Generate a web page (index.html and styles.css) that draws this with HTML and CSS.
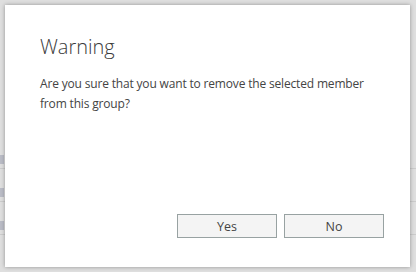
FILE: index.html
```html
<!DOCTYPE html>
<html lang="en">
<head>
    <meta charset="UTF-8">
    <title>Warning</title>
    <link rel="stylesheet" href="styles.css">
</head>
<body>
    <div class="page">
        <div class="row"><span class="mark"></span></div>
        <div class="row"><span class="mark"></span></div>
        <div class="row"><span class="mark"></span></div>
    </div>
    <div class="overlay">
        <div class="dialog">
            <h1 class="dialog-title">Warning</h1>
            <p class="dialog-text">Are you sure that you want to remove the selected member from this group?</p>
            <div class="dialog-buttons">
                <button class="button">Yes</button>
                <button class="button">No</button>
            </div>
        </div>
    </div>
</body>
</html>
```

FILE: styles.css
```css
html, body { margin: 0; height: 100%; }
body { font-family: "Open Sans", "Noto Sans", sans-serif; background: #f2f2f2; overflow: hidden; position: relative; }
.page { padding-top: 136px; }
.row { height: 32px; border-bottom: 1px solid #d4d4d4; display: flex; align-items: center; }
.mark { display: block; width: 4px; height: 9px; background: #b9bccb; margin-top: 14px; }
.overlay { position: absolute; inset: 0; background: rgba(190,190,190,0.35); }
.dialog { position: absolute; left: 5px; top: 5px; width: 405px; height: 262px; background: #fff; box-shadow: 0 0 4px rgba(0,0,0,0.35); box-sizing: border-box; padding: 28px 20px 0 35px; display: flex; flex-direction: column; }
.dialog-title { font-size: 20px; font-weight: 300; color: #3b3b3b; margin: 0; line-height: 28px; }
.dialog-text { font-size: 12px; letter-spacing: -0.17px; color: #444; margin: 13px 0 0; line-height: 20px; }
.dialog-buttons { margin-top: auto; margin-bottom: 29px; display: flex; justify-content: flex-end; gap: 7px; margin-right: 6px; }
.button { width: 100px; height: 24px; border: 1px solid #98a2a2; background: #f4f4f4; color: #444; font-family: inherit; font-size: 12.5px; padding: 0; }
```
